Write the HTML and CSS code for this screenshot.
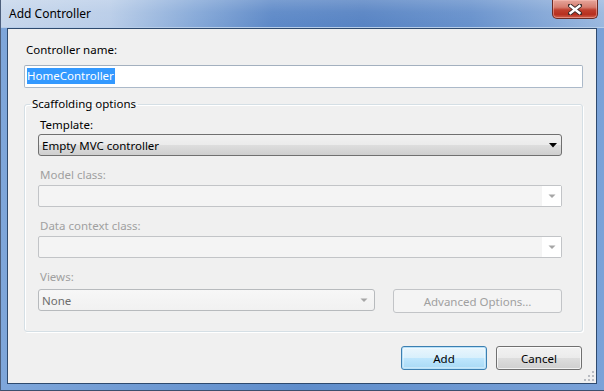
FILE: index.html
```html
<!DOCTYPE html>
<html>
<head>
<meta charset="utf-8">
<link rel="stylesheet" href="styles.css">
</head>
<body>
<div class="window">
  <div class="titlebar">
    <span class="title">Add Controller</span>
    <div class="close">
      <svg width="14" height="11" viewBox="0 0 14 11"><path d="M2 1.5 L12 9.5 M12 1.5 L2 9.5" stroke="#3a2a28" stroke-width="4.2" stroke-linecap="square"/><path d="M2.5 2 L11.5 9 M11.5 2 L2.5 9" stroke="#ffffff" stroke-width="2.4" stroke-linecap="square"/></svg>
    </div>
  </div>
  <div class="client">
    <div class="label">Controller name:</div>
    <div class="textbox"><span class="sel">HomeController</span></div>
    <fieldset class="group">
      <legend class="legend">Scaffolding options</legend>
      <div class="label">Template:</div>
      <div class="combo">
        <span>Empty MVC controller</span>
        <svg class="arrow" width="8" height="5" viewBox="0 0 8 5"><path d="M0 0 H8 L4 4.5 Z" fill="#000"/></svg>
      </div>
      <div class="label disabled gap">Model class:</div>
      <div class="combo off">
        <span></span>
        <div class="dropzone"><svg width="8" height="5" viewBox="0 0 8 5"><path d="M0.5 0.5 H7.5 L4 4 Z" fill="#a6a6a6"/></svg></div>
      </div>
      <div class="label disabled gap">Data context class:</div>
      <div class="combo off">
        <span></span>
        <div class="dropzone"><svg width="8" height="5" viewBox="0 0 8 5"><path d="M0.5 0.5 H7.5 L4 4 Z" fill="#a6a6a6"/></svg></div>
      </div>
      <div class="label disabled gap">Views:</div>
      <div class="row">
        <div class="combo views">
          <span>None</span>
          <svg class="arrow" width="8" height="5" viewBox="0 0 8 5"><path d="M0.5 0.5 H7.5 L4 4 Z" fill="#a6a6a6"/></svg>
        </div>
        <div class="btn adv">Advanced Options…</div>
      </div>
    </fieldset>
    <div class="buttons">
      <div class="btn primary">Add</div>
      <div class="btn">Cancel</div>
    </div>
    <svg class="grip" width="11" height="11" viewBox="0 0 11 11">
      <g fill="#b9bcc2">
        <rect x="8" y="0" width="2" height="2"/>
        <rect x="4" y="4" width="2" height="2"/><rect x="8" y="4" width="2" height="2"/>
        <rect x="0" y="8" width="2" height="2"/><rect x="4" y="8" width="2" height="2"/><rect x="8" y="8" width="2" height="2"/>
      </g>
    </svg>
  </div>
</div>
</body>
</html>
```
FILE: styles.css
```css
html, body {
  margin: 0;
  padding: 0;
  background: #6b98d3;
}
body {
  font-family: "Noto Sans", "Open Sans", sans-serif;
  font-size: 11.5px;
  color: #000;
}
.window {
  width: 604px;
  height: 391px;
  box-sizing: border-box;
  display: flex;
  flex-direction: column;
  border-left: 1px solid #4d5f7c;
  border-bottom: 1px solid #3d4f6d;
  background: linear-gradient(90deg, #7ea6da 0%, #5f8dcb 50%, #7aa2d8 100%);
  overflow: hidden;
}
.titlebar {
  height: 28px;
  flex: none;
  display: flex;
  justify-content: space-between;
  align-items: flex-start;
  background:
    linear-gradient(180deg, rgba(255,255,255,0.18) 0%, rgba(255,255,255,0.05) 45%, rgba(0,0,0,0) 100%),
    linear-gradient(90deg, #c6d6eb 0%, #b9cde8 18%, #86a9d8 32%, #5c88c7 45%, #5783c3 60%, #6791cc 78%, #9ab8df 100%);
  border-bottom: 1px solid #b7cde8;
  box-sizing: border-box;
}
.title {
  padding-left: 8px;
  line-height: 28px;
  margin-top: 0;
  font-size: 12px;
  color: #000;
}
.close {
  width: 46px;
  height: 19px;
  margin-right: 6px;
  box-sizing: border-box;
  border: 1px solid #6b2b25;
  border-top: none;
  border-radius: 0 0 5px 5px;
  background: linear-gradient(180deg, #e6a69b 0%, #d67d6f 40%, #c0402f 55%, #b7301f 80%, #d0624f 100%);
  box-shadow: inset 0 0 0 1px rgba(255,200,190,0.45);
  display: flex;
  align-items: center;
  justify-content: center;
}
.client {
  position: relative;
  flex: 1;
  margin: 0 7px 6px 6px;
  border: 1px solid #2e4a6e;
  background: #f0f0f0;
  padding: 13px 13px 0 16px;
  display: flex;
  flex-direction: column;
}
.label {
  line-height: 15px;
  height: 15px;
  padding-left: 2px;
}
.label.disabled {
  color: #a0a0a0;
}
.label.gap {
  margin-top: 11px;
}
.textbox {
  margin-top: 8px;
  height: 23px;
  box-sizing: border-box;
  border: 1px solid #abb9c9;
  border-top-color: #a3b0bf;
  border-radius: 2px;
  background: #fff;
  padding: 2px 0 0 2px;
  display: flex;
  align-items: flex-start;
}
.sel {
  background: #3399ff;
  color: #fff;
  line-height: 16px;
  height: 16px;
  padding-right: 1px;
}
.group {
  margin: 9px 0 0 0;
  border: 1px solid #d5dfe5;
  border-radius: 3px;
  box-shadow: inset 1px 1px 0 #fff, 1px 1px 0 #fff;
  padding: 5px 20px 18px 13px;
  min-width: 0;
}
.legend {
  padding: 0 2px;
  margin-left: -8px;
  line-height: 15px;
  position: relative;
  top: -1px;
}
.combo {
  margin-top: 2px;
  height: 22px;
  box-sizing: border-box;
  border: 1px solid #707070;
  border-radius: 3px;
  background: linear-gradient(180deg, #f2f2f2 0%, #ebebeb 48%, #dddddd 52%, #cfcfcf 100%);
  display: flex;
  align-items: center;
  justify-content: space-between;
  padding-left: 3px;
}
.combo .arrow {
  margin-right: 4px;
}
.combo.off {
  margin-top: 3px;
  border-color: #c2c4c7;
  border-radius: 2px;
  background: #f4f4f4;
  padding-left: 0;
}
.dropzone {
  width: 19px;
  height: 20px;
  background: #fff;
  display: flex;
  align-items: center;
  justify-content: center;
}
.row {
  margin-top: 5px;
  display: flex;
  align-items: flex-start;
  gap: 18px;
}
.combo.views {
  margin-top: 0;
  width: 337px;
  flex: none;
  border-color: #b7babd;
  background: linear-gradient(180deg, #f7f7f7 0%, #f1f1f1 100%);
  color: #6d6d6d;
}
.combo.views .arrow {
  margin-right: 6px;
}
.btn {
  width: 86px;
  height: 24px;
  box-sizing: border-box;
  border: 1px solid #707070;
  border-radius: 3px;
  background: linear-gradient(180deg, #f2f2f2 0%, #ebebeb 48%, #dddddd 52%, #cfcfcf 100%);
  box-shadow: inset 0 0 0 1px rgba(255,255,255,0.7);
  display: flex;
  align-items: center;
  justify-content: center;
}
.btn.adv {
  width: 169px;
  border-color: #c2c4c7;
  background: #f4f4f4;
  box-shadow: none;
  color: #a0a0a0;
}
.btn.primary {
  border-color: #3c7fb1;
  background: linear-gradient(180deg, #eaf6fd 0%, #d9f0fc 48%, #bee6fd 52%, #a7d9f5 100%);
  box-shadow: inset 0 0 0 1px #b9e1f8, inset 0 0 0 2px rgba(255,255,255,0.35);
}
.buttons {
  margin-top: 14px;
  margin-right: 1px;
  display: flex;
  justify-content: flex-end;
  gap: 9px;
}
.grip {
  position: absolute;
  right: 1px;
  bottom: 1px;
}
```
